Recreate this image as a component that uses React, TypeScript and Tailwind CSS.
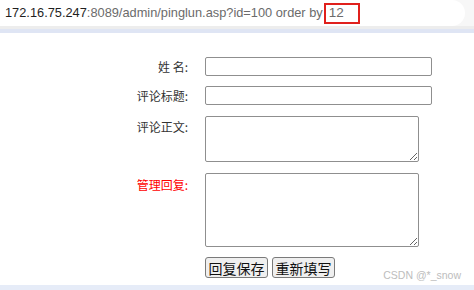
export default function App() {
  const font = "font-['Microsoft_YaHei','Noto_Sans_CJK_SC',sans-serif]"
  return (
    <div className={`relative flex h-[290px] w-[474px] flex-col overflow-hidden bg-white ${font}`}>
      {/* address bar */}
      <div className="h-[26px] bg-[#f7f7f7]">
        <div className="flex h-full w-[465px] items-center rounded-r-[13px] bg-white pl-[5px] font-['Liberation_Sans',sans-serif] text-[12.8px] leading-none">
          <span className="text-[#1f1f1f]">172.16.75.247</span>
          <span className="text-[#6b6b6b]">:8089/admin/pinglun.asp?id=100 order by</span>
          <span className="ml-[1px] flex h-[21px] w-[36px] items-center border-2 border-[#e0201c] pl-[3px] text-[13.5px] text-[#6b6b6b]">12</span>
        </div>
      </div>
      <div className="h-[3px] bg-[#ededed]" />
      <div className="h-[4px] bg-[#dfe5f4]" />

      {/* form */}
      <div className="flex flex-1 flex-col gap-[10px] pt-[24px] text-[12px] text-[#333]">
        <div className="flex items-center">
          <div className="w-[190px] pr-[2px] text-right leading-[19px]">姓 名:</div>
          <input className="ml-[15px] h-[19px] w-[227px] rounded-[2px] border border-[#8f8f8f]" />
        </div>
        <div className="flex items-center">
          <div className="w-[190px] pr-[2px] text-right leading-[19px]">评论标题:</div>
          <input className="ml-[15px] h-[19px] w-[227px] rounded-[2px] border border-[#8f8f8f]" />
        </div>
        <div className="mt-[1px] flex items-start">
          <div className="w-[190px] pr-[2px] pt-[2px] text-right">评论正文:</div>
          <textarea className="ml-[15px] h-[46px] w-[214px] rounded-[2px] border border-[#8f8f8f]" />
        </div>
        <div className="mt-[1px] flex items-start">
          <div className="w-[190px] pr-[2px] pt-[3px] text-right text-[#f00]">管理回复:</div>
          <textarea className="ml-[15px] h-[74px] w-[214px] rounded-[2px] border border-[#8f8f8f]" />
        </div>
        <div className="flex gap-[4px] pl-[205px]">
          <button className="h-[21px] w-[63px] rounded-[3px] border border-[#7a7a7a] bg-[#efefef] text-[14px] leading-none text-[#111]">回复保存</button>
          <button className="h-[21px] w-[63px] rounded-[3px] border border-[#7a7a7a] bg-[#efefef] text-[14px] leading-none text-[#111]">重新填写</button>
        </div>
      </div>
      <div className="h-[5px] bg-[#e6ecf8]" />

      <div className="absolute bottom-[6px] right-[13px] font-['Liberation_Sans',sans-serif] text-[10.5px] text-[#bdbdbd]">CSDN @*_snow</div>
    </div>
  )
}
